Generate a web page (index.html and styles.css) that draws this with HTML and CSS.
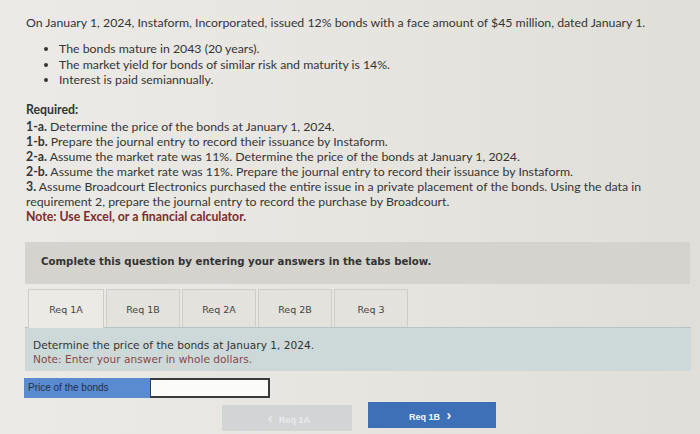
FILE: index.html
```html
<!DOCTYPE html>
<html>
<head>
<meta charset="utf-8">
<link rel="stylesheet" href="styles.css">
</head>
<body>
<div class="page">
  <p class="intro">On January 1, 2024, Instaform, Incorporated, issued 12% bonds with a face amount of $45 million, dated January 1.</p>
  <ul class="bullets">
    <li>The bonds mature in 2043 (20 years).</li>
    <li>The market yield for bonds of similar risk and maturity is 14%.</li>
    <li>Interest is paid semiannually.</li>
  </ul>
  <div class="required">
    <div class="req-title">Required:</div>
    <div><b>1-a.</b> Determine the price of the bonds at January 1, 2024.</div>
    <div><b>1-b.</b> Prepare the journal entry to record their issuance by Instaform.</div>
    <div><b>2-a.</b> Assume the market rate was 11%. Determine the price of the bonds at January 1, 2024.</div>
    <div><b>2-b.</b> Assume the market rate was 11%. Prepare the journal entry to record their issuance by Instaform.</div>
    <div><b>3.</b> Assume Broadcourt Electronics purchased the entire issue in a private placement of the bonds. Using the data in</div>
    <div>requirement 2, prepare the journal entry to record the purchase by Broadcourt.</div>
    <div class="note">Note: Use Excel, or a financial calculator.</div>
  </div>

  <div class="complete">Complete this question by entering your answers in the tabs below.</div>

  <div class="tabs">
    <div class="tab active">Req 1A</div>
    <div class="tab">Req 1B</div>
    <div class="tab">Req 2A</div>
    <div class="tab">Req 2B</div>
    <div class="tab">Req 3</div>
  </div>
  <div class="panel">
    <div>Determine the price of the bonds at January 1, 2024.</div>
    <div class="panel-note">Note: Enter your answer in whole dollars.</div>
  </div>
  <div class="answer">
    <div class="label">Price of the bonds</div>
    <div class="input"></div>
  </div>
  <div class="nav">
    <div class="btn prev"><span class="chev">&lsaquo;</span> Req 1A</div>
    <div class="btn next">Req 1B <span class="chev">&rsaquo;</span></div>
  </div>
</div>
</body>
</html>
```
FILE: styles.css
```css
html, body {
  margin: 0;
  padding: 0;
}
body {
  width: 700px;
  height: 434px;
  overflow: hidden;
  background: linear-gradient(90deg, #ebeae6 0%, #e7e5e0 50%, #e0ded8 100%);
  font-family: Lato, "Open Sans", sans-serif;
  color: #353535;
}
.page {
  padding: 15px 0 0 26px;
}
.intro {
  margin: 0;
  font-size: 12.3px;
  line-height: 15px;
}
.bullets {
  margin: 11px 0 0 0;
  padding-left: 33px;
  font-size: 12.3px;
  line-height: 15.5px;
}
.required {
  margin-top: 14px;
  font-size: 12.3px;
  line-height: 15px;
}
.required b {
  font-weight: 700;
}
.req-title {
  font-weight: 700;
  margin-bottom: 2px;
}
.note {
  font-weight: 700;
  color: #7c2c2c;
}
.complete {
  margin-top: 18px;
  margin-left: -1px;
  width: 665px;
  height: 42px;
  box-sizing: border-box;
  padding-left: 16px;
  line-height: 40px;
  background: #d4d3ce;
  font-family: "DejaVu Sans", Verdana, sans-serif;
  font-weight: bold;
  font-size: 10.2px;
  color: #333;
}
.tabs {
  display: flex;
  gap: 2px;
  margin-top: 5px;
  margin-left: 2px;
}
.tab {
  width: 74px;
  height: 38px;
  box-sizing: border-box;
  border: 1px solid #cfcdc8;
  border-bottom: none;
  background: #e4e2dd;
  font-family: "DejaVu Sans", Verdana, sans-serif;
  font-size: 9.5px;
  line-height: 39px;
  text-align: center;
  color: #444;
}
.tab.active {
  width: 76px;
  background: #eceae5;
  height: 39px;
  margin-bottom: -1px;
  position: relative;
}
.panel {
  width: 666px;
  height: 44px;
  box-sizing: border-box;
  margin-left: -1px;
  padding: 10px 0 0 8px;
  background: #cdd8d9;
  border-top: 1px solid #b9c3c4;
  font-family: "DejaVu Sans", Verdana, sans-serif;
  font-size: 10.6px;
  line-height: 14px;
  color: #333;
}
.panel-note {
  color: #874848;
}
.answer {
  display: flex;
  margin-top: 7px;
  margin-left: -2px;
  height: 20px;
}
.label {
  width: 126px;
  background: #5a8bd0;
  color: #20304a;
  font-family: "Liberation Sans", Arial, sans-serif;
  font-size: 10px;
  line-height: 20px;
  padding-left: 4px;
  box-sizing: border-box;
}
.input {
  width: 120px;
  box-sizing: border-box;
  border: 2px solid #3a3a3a;
  border-left: 1px solid #3a3a3a;
  background: #fbfbfa;
}
.nav {
  display: flex;
  gap: 16px;
  margin-top: 4px;
  margin-left: 196px;
}
.btn {
  height: 26px;
  line-height: 26px;
  text-align: center;
  font-family: "Liberation Sans", Arial, sans-serif;
  font-size: 9px;
  font-weight: bold;
}
.btn.prev {
  width: 130px;
  background: #d2d4d5;
  color: #e9ecee;
  margin-top: 3px;
}
.btn.next {
  width: 128px;
  background: #3e70b8;
  color: #f3f6fa;
}
.chev {
  font-size: 14px;
  font-weight: bold;
  margin: 0 4px;
}
```
